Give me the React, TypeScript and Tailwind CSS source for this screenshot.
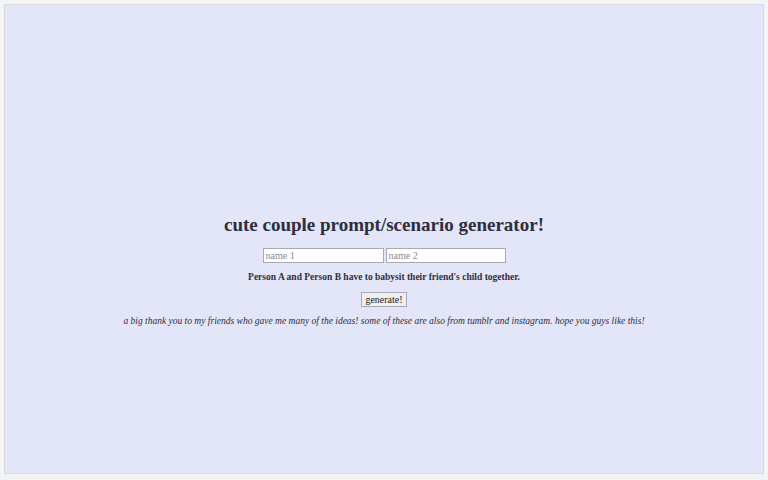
import React, { useState } from "react";

const prompts = [
  "Person A and Person B have to babysit their friend's child together.",
];

export default function App() {
  const [a, setA] = useState("");
  const [b, setB] = useState("");
  const [idx] = useState(0);
  const text = prompts[idx]
    .replace("Person A", a || "Person A")
    .replace("Person B", b || "Person B");

  return (
    <div className="h-[480px] w-[768px] bg-[#f4f4f4] p-[4px]">
      <div
        className="flex h-[470px] w-[760px] flex-col items-center border border-[#d9d9e2] bg-[#e3e5f9] pt-[208px] text-[#2e2e3c]"
        style={{ fontFamily: '"Liberation Serif", "DejaVu Serif", serif' }}
      >
        <h1 className="text-[19px] font-bold leading-[24px]">
          cute couple prompt/scenario generator!
        </h1>
        <div className="mt-[11px] flex gap-[2px]">
          <input
            value={a}
            onChange={(e) => setA(e.target.value)}
            placeholder="name 1"
            className="h-[15px] w-[121px] border border-[#a9a9b5] bg-white px-[2px] text-[10px] leading-[13px] outline-none placeholder:text-[#8a8a94]"
          />
          <input
            value={b}
            onChange={(e) => setB(e.target.value)}
            placeholder="name 2"
            className="h-[15px] w-[120px] border border-[#a9a9b5] bg-white px-[2px] text-[10px] leading-[13px] outline-none placeholder:text-[#8a8a94]"
          />
        </div>
        <p className="mt-[7px] text-[9.5px] font-bold leading-[14px]">{text}</p>
        <button className="mt-[8px] h-[15px] border border-[#a9a9b5] bg-[#f0f0f0] px-[3px] text-[10px] leading-[13px] text-[#222]">
          generate!
        </button>
        <p className="mt-[7px] text-[9.5px] italic leading-[14px]">
          a big thank you to my friends who gave me many of the ideas! some of these are also from tumblr and instagram. hope you guys like this!
        </p>
      </div>
    </div>
  );
}
